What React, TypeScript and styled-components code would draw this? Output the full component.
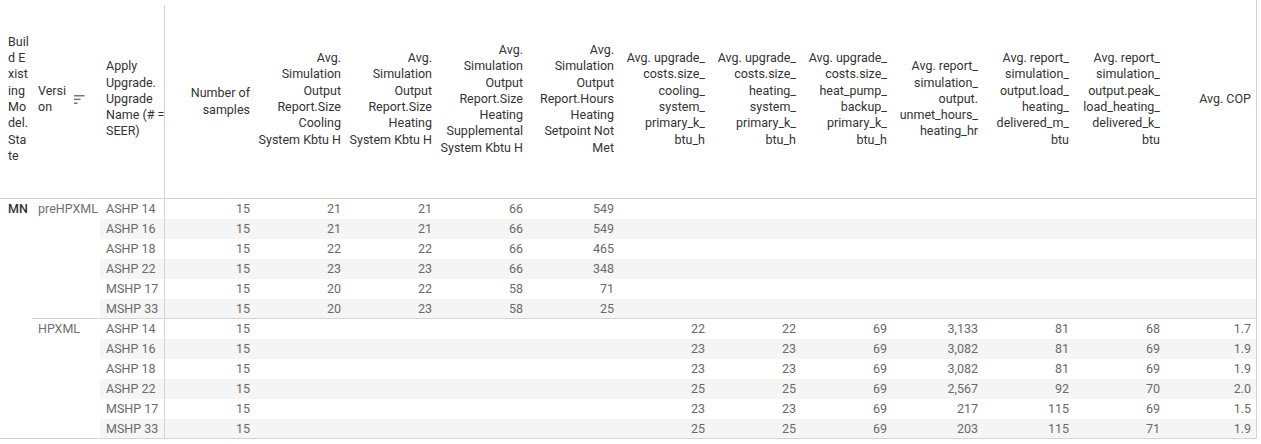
import React from 'react';
import styled, { createGlobalStyle, css } from 'styled-components';

const GlobalStyle = createGlobalStyle`
  body {
    margin: 0;
    background: #ffffff;
    font-family: Roboto, "Liberation Sans", sans-serif;
  }
`;

const LINE = '#d4d4d4';

const Table = styled.div`
  display: grid;
  grid-template-columns: 32px 68px 64px repeat(11, 91px) 92px;
  grid-template-rows: 199px repeat(12, 20px);
  font-size: 12.5px;
`;

const HeaderCell = styled.div<{ $right?: boolean; $pad?: number; $divider?: boolean; $last?: boolean }>`
  box-sizing: border-box;
  display: flex;
  align-items: center;
  gap: 8px;
  justify-content: ${(p) => (p.$right ? 'flex-end' : 'flex-start')};
  padding-left: ${(p) => p.$pad ?? 0}px;
  padding-right: ${(p) => (p.$right ? 5 : 0)}px;
  border-bottom: 1px solid ${LINE};
  color: #333333;
  line-height: 16.3px;
  ${(p) =>
    p.$divider &&
    css`
      margin-top: 5px;
      border-left: 1px solid ${LINE};
    `}
  ${(p) =>
    p.$last &&
    css`
      border-right: 1px solid ${LINE};
    `}
`;

const HeaderLabel = styled.div<{ $right?: boolean }>`
  white-space: pre;
  text-align: ${(p) => (p.$right ? 'right' : 'left')};
`;

const SortIcon = () => (
  <svg width="11" height="9" viewBox="0 0 11 9" fill="#777777">
    <rect x="0" y="0" width="10.5" height="1.5" />
    <rect x="0" y="3.6" width="6.5" height="1.5" />
    <rect x="0" y="7.5" width="3.5" height="1.5" />
  </svg>
);

const StateCell = styled.div`
  box-sizing: border-box;
  grid-row: span 12;
  padding-left: 8px;
  line-height: 19px;
  color: #333333;
  font-weight: 500;
  border-bottom: 1px solid ${LINE};
`;

const VersionCell = styled.div`
  box-sizing: border-box;
  grid-row: span 6;
  padding-left: 6px;
  line-height: 19px;
  color: #707070;
  border-bottom: 1px solid ${LINE};
`;

const BodyCell = styled.div<{ $band: boolean; $end: boolean; $right?: boolean; $divider?: boolean; $last?: boolean }>`
  box-sizing: border-box;
  line-height: 19px;
  white-space: nowrap;
  color: #6a6a6a;
  background: ${(p) => (p.$band ? '#f5f5f5' : '#ffffff')};
  text-align: ${(p) => (p.$right ? 'right' : 'left')};
  padding: ${(p) => (p.$right ? '0 5px 0 0' : '0 0 0 6px')};
  ${(p) => p.$end && css`border-bottom: 1px solid ${LINE};`}
  ${(p) => p.$divider && css`border-left: 1px solid ${LINE};`}
  ${(p) => p.$last && css`border-right: 1px solid ${LINE};`}
`;

const measures = [
  'Number of\nsamples',
  'Avg.\nSimulation\nOutput\nReport.Size\nCooling\nSystem Kbtu H',
  'Avg.\nSimulation\nOutput\nReport.Size\nHeating\nSystem Kbtu H',
  'Avg.\nSimulation\nOutput\nReport.Size\nHeating\nSupplemental\nSystem Kbtu H',
  'Avg.\nSimulation\nOutput\nReport.Hours\nHeating\nSetpoint Not\nMet',
  'Avg. upgrade_\ncosts.size_\ncooling_\nsystem_\nprimary_k_\nbtu_h',
  'Avg. upgrade_\ncosts.size_\nheating_\nsystem_\nprimary_k_\nbtu_h',
  'Avg. upgrade_\ncosts.size_\nheat_pump_\nbackup_\nprimary_k_\nbtu_h',
  'Avg. report_\nsimulation_\noutput.\nunmet_hours_\nheating_hr',
  'Avg. report_\nsimulation_\noutput.load_\nheating_\ndelivered_m_\nbtu',
  'Avg. report_\nsimulation_\noutput.peak_\nload_heating_\ndelivered_k_\nbtu',
  'Avg. COP',
];

const groups = [
  {
    version: 'preHPXML',
    rows: [
      ['ASHP 14', '15', '21', '21', '66', '549', '', '', '', '', '', '', ''],
      ['ASHP 16', '15', '21', '21', '66', '549', '', '', '', '', '', '', ''],
      ['ASHP 18', '15', '22', '22', '66', '465', '', '', '', '', '', '', ''],
      ['ASHP 22', '15', '23', '23', '66', '348', '', '', '', '', '', '', ''],
      ['MSHP 17', '15', '20', '22', '58', '71', '', '', '', '', '', '', ''],
      ['MSHP 33', '15', '20', '23', '58', '25', '', '', '', '', '', '', ''],
    ],
  },
  {
    version: 'HPXML',
    rows: [
      ['ASHP 14', '15', '', '', '', '', '22', '22', '69', '3,133', '81', '68', '1.7'],
      ['ASHP 16', '15', '', '', '', '', '23', '23', '69', '3,082', '81', '69', '1.9'],
      ['ASHP 18', '15', '', '', '', '', '23', '23', '69', '3,082', '81', '69', '1.9'],
      ['ASHP 22', '15', '', '', '', '', '25', '25', '69', '2,567', '92', '70', '2.0'],
      ['MSHP 17', '15', '', '', '', '', '23', '23', '69', '217', '115', '69', '1.5'],
      ['MSHP 33', '15', '', '', '', '', '25', '25', '69', '203', '115', '71', '1.9'],
    ],
  },
];

export default function App() {
  return (
    <>
      <GlobalStyle />
      <Table>
        <HeaderCell $pad={8}>
          <HeaderLabel>{'Buil\nd E\nxist\ning\nMo\ndel.\nSta\nte'}</HeaderLabel>
        </HeaderCell>
        <HeaderCell $pad={6}>
          <HeaderLabel>{'Versi\non'}</HeaderLabel>
          <SortIcon />
        </HeaderCell>
        <HeaderCell $pad={6}>
          <HeaderLabel>{'Apply\nUpgrade.\nUpgrade\nName (# =\nSEER)'}</HeaderLabel>
        </HeaderCell>
        {measures.map((m, i) => (
          <HeaderCell key={m} $right $divider={i === 0} $last={i === measures.length - 1}>
            <HeaderLabel $right>{m}</HeaderLabel>
          </HeaderCell>
        ))}

        <StateCell>MN</StateCell>
        {groups.map((g) => (
          <React.Fragment key={g.version}>
            <VersionCell>{g.version}</VersionCell>
            {g.rows.map((row, r) => {
              const band = r % 2 === 1;
              const end = r === g.rows.length - 1;
              return row.map((value, c) => (
                <BodyCell
                  key={`${g.version}-${r}-${c}`}
                  $band={band}
                  $end={end}
                  $right={c > 0}
                  $divider={c === 1}
                  $last={c === row.length - 1}
                >
                  {value}
                </BodyCell>
              ));
            })}
          </React.Fragment>
        ))}
      </Table>
    </>
  );
}
